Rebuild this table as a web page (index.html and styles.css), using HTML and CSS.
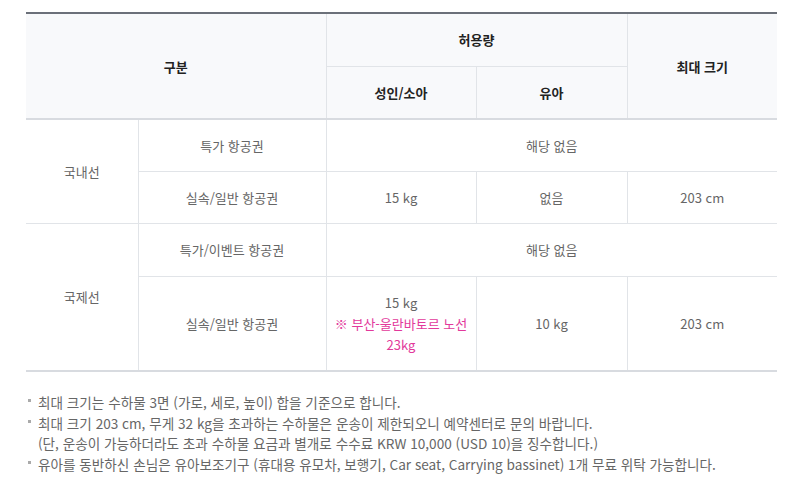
FILE: index.html
```html
<!DOCTYPE html>
<html lang="ko">
<head>
<meta charset="utf-8">
<link rel="stylesheet" href="styles.css">
</head>
<body>
<div class="wrap">
  <table class="bag">
    <colgroup>
      <col class="c1"><col class="c2"><col class="c3"><col class="c4"><col class="c5">
    </colgroup>
    <thead>
      <tr class="h1">
        <th colspan="2" rowspan="2">구분</th>
        <th colspan="2">허용량</th>
        <th rowspan="2" class="last">최대 크기</th>
      </tr>
      <tr class="h2">
        <th>성인/소아</th>
        <th>유아</th>
      </tr>
    </thead>
    <tbody>
      <tr class="r">
        <td rowspan="2" class="first">국내선</td>
        <td>특가 항공권</td>
        <td colspan="3" class="last">해당 없음</td>
      </tr>
      <tr class="r">
        <td>실속/일반 항공권</td>
        <td>15 kg</td>
        <td>없음</td>
        <td class="last">203 cm</td>
      </tr>
      <tr class="r r3">
        <td rowspan="2" class="first">국제선</td>
        <td>특가/이벤트 항공권</td>
        <td colspan="3" class="last">해당 없음</td>
      </tr>
      <tr class="r tall">
        <td>실속/일반 항공권</td>
        <td class="multi">15 kg<br><span class="pink">※ 부산-울란바토르 노선<br>23kg</span></td>
        <td>10 kg</td>
        <td class="last">203 cm</td>
      </tr>
    </tbody>
  </table>
  <ul class="notes">
    <li>최대 크기는 수하물 3면 (가로, 세로, 높이) 합을 기준으로 합니다.</li>
    <li>최대 크기 203 cm, 무게 32 kg을 초과하는 수하물은 운송이 제한되오니 예약센터로 문의 바랍니다.<br>(단, 운송이 가능하더라도 초과 수하물 요금과 별개로 수수료 KRW 10,000 (USD 10)을 징수합니다.)</li>
    <li>유아를 동반하신 손님은 유아보조기구 (휴대용 유모차, 보행기, Car seat, Carrying bassinet) 1개 무료 위탁 가능합니다.</li>
  </ul>
</div>
</body>
</html>
```
FILE: styles.css
```css
html, body {
  margin: 0;
  padding: 0;
  background: #fff;
}
body {
  font-family: "Noto Sans CJK KR", "Noto Sans", sans-serif;
  font-size: 13px;
  color: #666;
}
.wrap {
  padding: 12px 0 0 26px;
  width: 751px;
}
.bag {
  width: 751px;
  border-collapse: collapse;
  table-layout: fixed;
  border-top: 2px solid #6b7079;
  border-bottom: 2px solid #d8dbe0;
}
.c1 { width: 112px; }
.c2 { width: 188px; }
.c3 { width: 150px; }
.c4 { width: 151px; }
.c5 { width: 150px; }
.bag th {
  background: #f8f9fb;
  color: #222;
  font-weight: 700;
  font-size: 13px;
  border: 1px solid #e1e4e8;
  padding: 0;
  text-align: center;
}
.bag thead tr:last-child th,
.bag thead th[rowspan] {
  border-bottom: 2px solid #d8dbe0;
}
.bag td {
  border: 1px solid #e1e4e8;
  padding: 0;
  text-align: center;
  color: #666;
}
.bag th:first-child, .bag td.first { border-left: 0; }
.bag .last { border-right: 0; }
.h1 { height: 53px; }
.h2 { height: 53px; }
.r { height: 52px; }
.r.r3 { height: 53px; }
.r.tall { height: 95px; }
.multi { line-height: 21px; }
.pink { color: #e2399b; }
.notes {
  list-style: none;
  margin: 20px 0 0;
  padding: 0;
  line-height: 20.7px;
  color: #666;
  font-size: 13.6px;
}
.notes li {
  position: relative;
  padding-left: 12px;
}
.notes li::before {
  content: "";
  position: absolute;
  left: 2px;
  top: 7px;
  width: 3px;
  height: 3px;
  background: #aaa;
}
```
